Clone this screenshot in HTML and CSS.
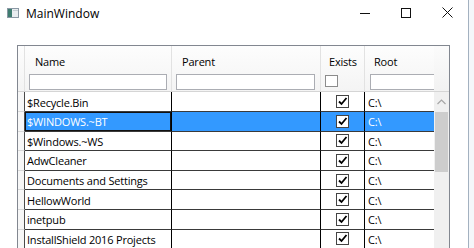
FILE: index.html
```html
<!DOCTYPE html>
<html>
<head>
<meta charset="utf-8">
<link rel="stylesheet" href="styles.css">
</head>
<body>
<div class="screen">
  <div class="window">
    <div class="titlebar">
      <svg class="app-icon" width="12" height="10" viewBox="0 0 12 10">
        <rect x="0.5" y="0.5" width="11" height="9" fill="#e9edf0" stroke="#8a98a4"/>
        <rect x="1" y="1" width="4" height="8" fill="#3f7c70"/>
        <rect x="6" y="2" width="5" height="1" fill="#c5cdd3"/>
      </svg>
      <span class="title">MainWindow</span>
      <div class="controls">
        <span class="ctl"><svg width="10" height="10" viewBox="0 0 10 10"><line x1="0" y1="5.5" x2="10" y2="5.5" stroke="#111" stroke-width="1"/></svg></span>
        <span class="ctl"><svg width="10" height="10" viewBox="0 0 10 10"><rect x="0.5" y="0.5" width="9" height="9" fill="none" stroke="#111" stroke-width="1"/></svg></span>
        <span class="ctl close"><svg width="11" height="11" viewBox="0 0 11 11"><path d="M0.5 0.5 L10.5 10.5 M10.5 0.5 L0.5 10.5" stroke="#111" stroke-width="1" fill="none"/></svg></span>
      </div>
    </div>
    <div class="client">
      <div class="datagrid">
        <div class="viewport">
          <div class="hrow">
            <div class="hcell c-rh"></div>
            <div class="hcell c-name"><span class="hlabel">Name</span><span class="filter f-name"></span></div>
            <div class="hcell c-parent"><span class="hlabel">Parent</span><span class="filter f-parent"></span></div>
            <div class="hcell c-exists"><span class="hlabel l-exists">Exists</span><span class="hchk"></span></div>
            <div class="hcell c-root"><span class="hlabel l-root">Root</span><span class="filter f-root"></span></div>
          </div>

          <div class="row">
            <div class="cell c-rh"></div>
            <div class="cell c-name">$Recycle.Bin</div>
            <div class="cell c-parent"></div>
            <div class="cell c-exists"><span class="chk"><svg width="11" height="11" viewBox="0 0 11 11"><path d="M2 5.5 L4.5 8 L9.5 2" stroke="#000" stroke-width="1.8" fill="none"/></svg></span></div>
            <div class="cell c-root">C:\</div>
          </div>
          <div class="row sel">
            <div class="cell c-rh"></div>
            <div class="cell c-name focus">$WINDOWS.~BT</div>
            <div class="cell c-parent"></div>
            <div class="cell c-exists"><span class="chk"><svg width="11" height="11" viewBox="0 0 11 11"><path d="M2 5.5 L4.5 8 L9.5 2" stroke="#000" stroke-width="1.8" fill="none"/></svg></span></div>
            <div class="cell c-root">C:\</div>
          </div>
          <div class="row">
            <div class="cell c-rh"></div>
            <div class="cell c-name">$Windows.~WS</div>
            <div class="cell c-parent"></div>
            <div class="cell c-exists"><span class="chk"><svg width="11" height="11" viewBox="0 0 11 11"><path d="M2 5.5 L4.5 8 L9.5 2" stroke="#000" stroke-width="1.8" fill="none"/></svg></span></div>
            <div class="cell c-root">C:\</div>
          </div>
          <div class="row">
            <div class="cell c-rh"></div>
            <div class="cell c-name">AdwCleaner</div>
            <div class="cell c-parent"></div>
            <div class="cell c-exists"><span class="chk"><svg width="11" height="11" viewBox="0 0 11 11"><path d="M2 5.5 L4.5 8 L9.5 2" stroke="#000" stroke-width="1.8" fill="none"/></svg></span></div>
            <div class="cell c-root">C:\</div>
          </div>
          <div class="row">
            <div class="cell c-rh"></div>
            <div class="cell c-name">Documents and Settings</div>
            <div class="cell c-parent"></div>
            <div class="cell c-exists"><span class="chk"><svg width="11" height="11" viewBox="0 0 11 11"><path d="M2 5.5 L4.5 8 L9.5 2" stroke="#000" stroke-width="1.8" fill="none"/></svg></span></div>
            <div class="cell c-root">C:\</div>
          </div>
          <div class="row">
            <div class="cell c-rh"></div>
            <div class="cell c-name">HellowWorld</div>
            <div class="cell c-parent"></div>
            <div class="cell c-exists"><span class="chk"><svg width="11" height="11" viewBox="0 0 11 11"><path d="M2 5.5 L4.5 8 L9.5 2" stroke="#000" stroke-width="1.8" fill="none"/></svg></span></div>
            <div class="cell c-root">C:\</div>
          </div>
          <div class="row">
            <div class="cell c-rh"></div>
            <div class="cell c-name">inetpub</div>
            <div class="cell c-parent"></div>
            <div class="cell c-exists"><span class="chk"><svg width="11" height="11" viewBox="0 0 11 11"><path d="M2 5.5 L4.5 8 L9.5 2" stroke="#000" stroke-width="1.8" fill="none"/></svg></span></div>
            <div class="cell c-root">C:\</div>
          </div>
          <div class="row">
            <div class="cell c-rh"></div>
            <div class="cell c-name">InstallShield 2016 Projects</div>
            <div class="cell c-parent"></div>
            <div class="cell c-exists"><span class="chk"><svg width="11" height="11" viewBox="0 0 11 11"><path d="M2 5.5 L4.5 8 L9.5 2" stroke="#000" stroke-width="1.8" fill="none"/></svg></span></div>
            <div class="cell c-root">C:\</div>
          </div>
        </div>
        <div class="vscroll">
          <div class="corner"></div>
          <div class="sbtn"><svg width="9" height="6" viewBox="0 0 9 6"><path d="M0.5 5 L4.5 1 L8.5 5" stroke="#a6a6a6" stroke-width="1.2" fill="none"/></svg></div>
          <div class="thumb"></div>
        </div>
      </div>
    </div>
  </div>
  <div class="edge"></div>
</div>
</body>
</html>
```

FILE: styles.css
```css
html, body {
  margin: 0;
  padding: 0;
}
body {
  width: 474px;
  height: 248px;
  overflow: hidden;
  background: #fff;
  font-family: "Open Sans", "Noto Sans", sans-serif;
  font-size: 11px;
  letter-spacing: -0.2px;
  color: #000;
}
.screen {
  display: flex;
  height: 248px;
}
.window {
  width: 468px;
  display: flex;
  flex-direction: column;
  background: #fff;
}
.edge {
  flex: 1;
  border-left: 1px solid #a3b1c0;
  background: #f4f7fa;
}
.titlebar {
  height: 25px;
  display: flex;
  align-items: center;
}
.app-icon {
  margin-left: 7px;
  display: block;
}
.title {
  margin-left: 7px;
  padding-top: 1px;
  font-size: 12px;
  letter-spacing: 0;
}
.controls {
  margin-left: auto;
  display: flex;
  height: 25px;
}
.ctl {
  width: 41px;
  display: flex;
  align-items: center;
  justify-content: center;
}
.ctl svg { display: block; }
.ctl.close { width: 42px; }

.client {
  margin-top: 20px;
  flex: 1;
}
.datagrid {
  margin-left: 17px;
  width: 433px;
  height: 203px;
  box-sizing: border-box;
  border: 1px solid #828790;
  border-bottom: none;
  display: flex;
  overflow: hidden;
}
.viewport {
  width: 416px;
}
.vscroll {
  width: 15px;
  background: #f0f0f0;
  display: flex;
  flex-direction: column;
}
.corner {
  height: 46.4px;
  box-sizing: border-box;
  border-bottom: 1px solid #d5d5d5;
  background: linear-gradient(#fbfbfb, #f2f2f2);
}
.sbtn {
  height: 19.6px;
  display: flex;
  align-items: center;
  justify-content: center;
}
.thumb {
  margin: 0 1px;
  height: 60px;
  background: #cdcdcd;
}

.hrow {
  display: flex;
  height: 46.4px;
  box-sizing: border-box;
  border-bottom: 1px solid #d5d5d5;
  background: linear-gradient(#fdfdfd, #f4f4f4);
}
.hcell {
  box-sizing: border-box;
  border-right: 1px solid #e2e2e2;
  display: flex;
  flex-direction: column;
  padding-top: 8px;
}
.hlabel {
  height: 16px;
  line-height: 16px;
  padding-left: 10px;
  white-space: nowrap;
}
.l-exists { padding-left: 8px; }
.l-root { padding-left: 9px; }
.filter {
  display: block;
  margin: 4px 0 0 4px;
  height: 16px;
  box-sizing: border-box;
  border: 1px solid #abadb3;
  background: #fff;
}
.f-name { width: 138px; }
.f-parent { width: 139px; }
.f-root { margin-left: 5px; width: 70px; }
.hchk {
  display: block;
  margin: 5px 0 0 4px;
  width: 13px;
  height: 12px;
  box-sizing: border-box;
  border: 1px solid #8c8c8c;
  background: #fff;
}

.c-rh { width: 7px; }
.c-name { width: 147px; }
.c-parent { width: 149px; }
.c-exists { width: 44px; }
.c-root { width: 69px; border-right: none; }

.row {
  display: flex;
  height: 19.6px;
}
.cell {
  box-sizing: border-box;
  height: 19.6px;
  border-right: 1px solid #000;
  border-bottom: 1px solid #3a3a3a;
  display: flex;
  align-items: center;
  padding-left: 2px;
  padding-top: 1px;
  white-space: nowrap;
  overflow: hidden;
}
.cell.c-rh {
  padding: 0;
  background: #f7f7f7;
  border-right: 1px solid #4a4a4a;
  border-bottom: 1px solid #d8d8d8;
}
.cell.c-exists {
  justify-content: center;
  padding: 0;
}
.cell.c-root {
  padding-left: 3px;
  border-right: none;
}
.row.sel .cell:not(.c-rh) {
  background: #3399ff;
  color: #fff;
}
.cell.focus {
  box-shadow: inset 0 0 0 1px #111;
}
.chk {
  width: 13px;
  height: 13px;
  box-sizing: border-box;
  border: 1px solid #444;
  background: #fff;
  display: flex;
  align-items: center;
  justify-content: center;
}
.chk svg { display: block; }
```
